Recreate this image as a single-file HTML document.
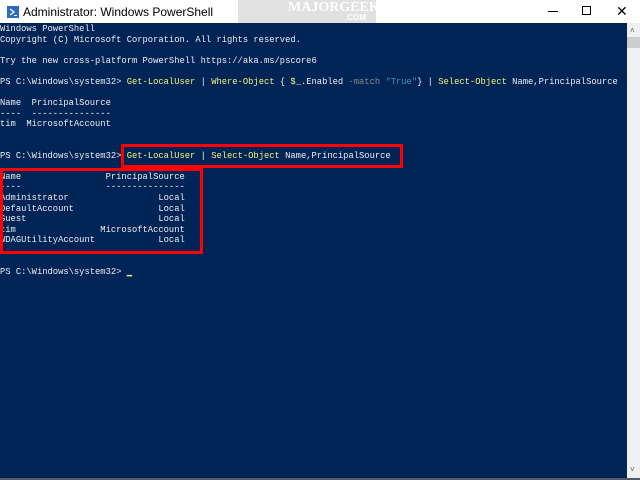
<!DOCTYPE html>
<html><head><meta charset="utf-8"><style>
html,body{margin:0;padding:0;width:640px;height:480px;overflow:hidden;background:#fff;}
#title{position:absolute;left:0;top:0;width:640px;height:23px;background:#fff;}
#title .t{position:absolute;left:23px;top:5px;font:12px "Liberation Sans",sans-serif;color:#000;}
#con{position:absolute;left:0;top:23px;width:627px;height:455px;background:#012456;}
#sb{position:absolute;left:627px;top:23px;width:13px;height:455px;background:#f0f0f0;}
#bot{position:absolute;left:0;top:478px;width:640px;height:2px;background:#505a6a;}
pre{position:absolute;left:0;top:24px;margin:0;font:8.8px/10.57px "Liberation Mono",monospace;color:#eeedf0;white-space:pre;}
.y{color:#f2f27a}.g{color:#8a8a8a}.c{color:#3a96b0}.w{color:#eeedf0}
.box{position:absolute;border:3px solid #f00;box-sizing:border-box;}
</style></head><body>
<div id="title">
<svg style="position:absolute;left:7px;top:6px" width="12" height="12"><rect width="12" height="12" fill="#2a6bc4"/><path d="M3 3 L7 6 L3 9" stroke="#fff" stroke-width="1.3" fill="none"/><path d="M7 9.5 H10" stroke="#fff" stroke-width="1"/></svg>
<div class="t">Administrator: Windows PowerShell</div>
<div style="position:absolute;left:238px;top:0;width:138px;height:23px;background:#dcdcdc;opacity:.85"></div>
<div style="position:absolute;left:288px;top:0;font:bold 14px 'Liberation Serif',serif;color:#fff">MAJORGEEKS</div>
<div style="position:absolute;left:345px;top:13px;font:bold 8px 'Liberation Sans',sans-serif;color:#fff">.COM</div>
<div style="position:absolute;left:548px;top:11px;width:10px;height:1px;background:#000"></div>
<div style="position:absolute;left:582px;top:6px;width:9px;height:9px;border:1px solid #000;box-sizing:border-box"></div>
<div style="position:absolute;left:616px;top:3px;font:14px 'Liberation Sans',sans-serif;color:#000">✕</div>
</div>
<div id="con"></div>
<div id="sb">
<div style="position:absolute;left:3px;top:3px;font:8px 'Liberation Sans',sans-serif;color:#606060">˄</div>
<div style="position:absolute;left:0;top:14px;width:13px;height:11px;background:#cdcdcd"></div>
<div style="position:absolute;left:3px;top:442px;font:8px 'Liberation Sans',sans-serif;color:#606060">˅</div>
</div>
<div id="bot"></div>
<pre>Windows PowerShell
Copyright (C) Microsoft Corporation. All rights reserved.

Try the new cross-platform PowerShell https://aka.ms/pscore6

PS C:\Windows\system32&gt; <span class="y">Get-LocalUser</span> | <span class="y">Where-Object</span> { <span class="y">$_</span>.Enabled <span class="g">-match</span> <span class="c">"True"</span>} | <span class="y">Select-Object</span> Name,PrincipalSource

Name  PrincipalSource
----  ---------------
tim  MicrosoftAccount


PS C:\Windows\system32&gt; <span class="y">Get-LocalUser</span> | <span class="y">Select-Object</span> Name,PrincipalSource

Name                PrincipalSource
----                ---------------
Administrator                 Local
DefaultAccount                Local
Guest                         Local
tim                MicrosoftAccount
WDAGUtilityAccount            Local


PS C:\Windows\system32&gt; <span class="y">▁</span></pre>
<div class="box" style="left:121px;top:144px;width:282px;height:24px"></div>
<div class="box" style="left:0;top:168px;width:203px;height:86px"></div>
</body></html>
